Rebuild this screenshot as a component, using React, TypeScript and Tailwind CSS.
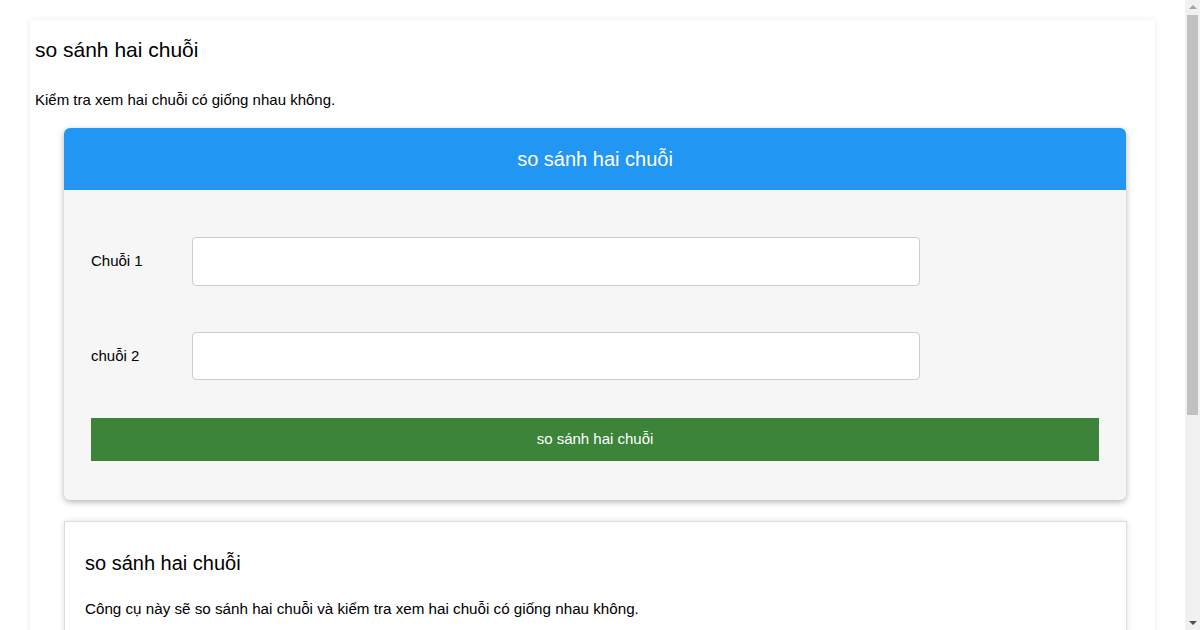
export default function App() {
  return (
    <div className="min-h-[700px] bg-white font-['Liberation_Sans',Arial,sans-serif] text-black">
      <div className="ml-[30px] mt-5 w-[1125px] bg-white px-[5px] pb-10 shadow-[0_0_6px_rgba(0,0,0,0.08)]">
        <h1 className="pt-[17px] text-[21px] leading-[26px]">so sánh hai chuỗi</h1>
        <p className="mt-[27px] text-[15px] leading-[20px]">Kiểm tra xem hai chuỗi có giống nhau không.</p>

        {/* form card */}
        <div className="ml-[29px] mt-[18px] w-[1062px] overflow-hidden rounded-md bg-[#f6f6f6] shadow-[0_2px_6px_rgba(0,0,0,0.3)]">
          <div className="flex h-[62px] items-center justify-center bg-[#2196f3] text-[20px] text-white">
            so sánh hai chuỗi
          </div>
          <div className="px-[27px] pb-[39px] pt-[47px]">
            <div className="flex items-center">
              <label className="w-[101px] text-[15px]">Chuỗi 1</label>
              <input type="text" className="h-[49px] w-[728px] rounded border border-[#ccc] bg-white px-3 outline-none" />
            </div>
            <div className="mt-[46px] flex items-center">
              <label className="w-[101px] text-[15px]">chuỗi 2</label>
              <input type="text" className="h-[48px] w-[728px] rounded border border-[#ccc] bg-white px-3 outline-none" />
            </div>
            <button type="button" className="mt-[38px] h-[43px] w-full bg-[#3b8439] text-[15px] text-white">
              so sánh hai chuỗi
            </button>
          </div>
        </div>

        {/* info card */}
        <div className="ml-[29px] mt-[21px] w-[1063px] border border-[#ddd] bg-white px-5 pb-8 pt-[28px] shadow-[0_0_6px_rgba(0,0,0,0.12)]">
          <h2 className="text-[20px] leading-[26px]">so sánh hai chuỗi</h2>
          <p className="mt-[23px] text-[15.2px] leading-[20px]">
            Công cụ này sẽ so sánh hai chuỗi và kiểm tra xem hai chuỗi có giống nhau không.
          </p>
        </div>
      </div>

      {/* scrollbar */}
      <div className="fixed right-0 top-0 flex h-[630px] w-[15px] flex-col items-center bg-[#f1f1f1]">
        <div className="mt-[5px] h-0 w-0 border-x-[4px] border-b-[4px] border-x-transparent border-b-[#a3a3a3]" />
        <div className="mt-[6px] h-[400px] w-[11px] bg-[#c1c1c1]" />
        <div className="mt-auto mb-[5px] h-0 w-0 border-x-[4px] border-t-[4px] border-x-transparent border-t-[#505050]" />
      </div>
    </div>
  )
}
